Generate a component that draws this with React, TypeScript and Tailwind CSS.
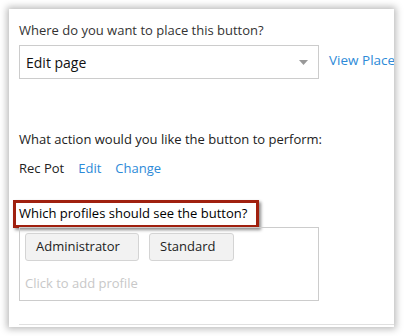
export default function App() {
  return (
    <div className="w-[404px] h-[336px] bg-white p-[9px]" style={{ fontFamily: '"Open Sans", "Noto Sans", sans-serif' }}>
      <div className="relative w-[385px] h-[318px] bg-white overflow-hidden shadow-[0_0_7px_2px_rgba(0,0,0,0.28)]">
        <div className="pl-[10px] pt-[12px]">
          <div className="text-[13px] leading-[18px] text-[#333]">Where do you want to place this button?</div>
          <div className="mt-[6px] flex items-center">
            <div className="w-[300px] h-[34px] shrink-0 border border-[#ccc] flex items-center justify-between pl-[6px] pr-[10px]">
              <span className="text-[14px] text-[#111]">Edit page</span>
              <svg width="9" height="5" viewBox="0 0 9 5"><path d="M0 0h9L4.5 5z" fill="#999" /></svg>
            </div>
            <span className="ml-[10px] text-[13.5px] text-[#2d8ad8] whitespace-nowrap -mt-[3px]">View Place</span>
          </div>
          <div className="mt-[51px] text-[13px] leading-[18px] text-[#222]">What action would you like the button to perform:</div>
          <div className="mt-[11px] flex items-center text-[13px] leading-[18px]">
            <span className="text-[#222]">Rec Pot</span>
            <span className="ml-[14px] text-[#2d8ad8]">Edit</span>
            <span className="ml-[14px] text-[#2d8ad8]">Change</span>
          </div>
          <div className="-ml-[6px] mt-[23px] w-[246px] h-[28px] border-[3px] border-[#a0200f] shadow-[2px_2px_3px_rgba(0,0,0,0.45)] flex items-center pl-[3px]">
            <span className="text-[13px] text-black">Which profiles should see the button?</span>
          </div>
          <div className="w-[300px] h-[74px] border border-[#ccc] -mt-[1px] px-[5px] pt-[5px]">
            <div className="flex gap-[10px]">
              <div className="w-[114px] h-[28px] bg-[#f2f2f2] border border-[#d4d4d4] rounded-[3px] flex items-center pl-[10px] text-[13px] text-[#222]">Administrator</div>
              <div className="w-[85px] h-[28px] bg-[#f2f2f2] border border-[#d4d4d4] rounded-[3px] flex items-center pl-[10px] text-[13px] text-[#222]">Standard</div>
            </div>
            <div className="mt-[13px] text-[13px] leading-[18px] text-[#c8c8c8]">Click to add profile</div>
          </div>
        </div>
        <div className="absolute left-[10px] right-0 bottom-[2px] h-px bg-[#e0e0e0]" />
      </div>
    </div>
  );
}
